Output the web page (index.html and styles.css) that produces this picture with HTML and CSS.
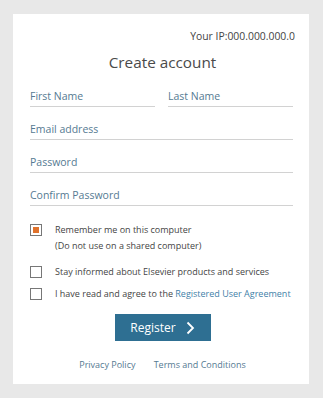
FILE: index.html
```html
<!DOCTYPE html>
<html lang="en">
<head>
    <meta charset="UTF-8">
    <meta name="viewport" content="width=device-width, initial-scale=1.0">
    <title>Create account</title>
    <link rel="stylesheet" href="styles.css">
</head>
<body>
    <div class="card">
        <div class="ip">Your IP:000.000.000.0</div>
        <h2 class="title">Create account</h2>
        <div class="row">
            <div class="field"><span>First Name</span></div>
            <div class="field"><span>Last Name</span></div>
        </div>
        <div class="field"><span>Email address</span></div>
        <div class="field"><span>Password</span></div>
        <div class="field"><span>Confirm Password</span></div>

        <div class="checks">
            <div class="check">
                <span class="box checked"></span>
                <div class="text">
                    Remember me on this computer<br>
                    <span class="sub">(Do not use on a shared computer)</span>
                </div>
            </div>
            <div class="check">
                <span class="box"></span>
                <div class="text">Stay informed about Elsevier products and services</div>
            </div>
            <div class="check">
                <span class="box"></span>
                <div class="text">I have read and agree to the <a href="#">Registered User Agreement</a></div>
            </div>
        </div>

        <div class="actions">
            <button class="btn">Register
                <svg width="9" height="14" viewBox="0 0 9 14"><path d="M1.5 1.5 L7 7 L1.5 12.5" fill="none" stroke="#fff" stroke-width="1.8"/></svg>
            </button>
        </div>
        <div class="links">
            <a href="#">Privacy Policy</a>
            <a href="#">Terms and Conditions</a>
        </div>
    </div>
</body>
</html>
```

FILE: styles.css
```css
body {
    margin: 0;
    padding: 14px 14px 14px 13px;
    background: #e8e8e8;
    font-family: 'Open Sans', sans-serif;
    color: #505050;
}

.card {
    background: #fff;
    height: 370px;
    box-sizing: border-box;
    padding: 16px 14px 0 17px;
}

.ip {
    text-align: right;
    font-size: 10.4px;
    color: #444;
    line-height: 12px;
}

.title {
    margin: 10px 0 0;
    text-align: center;
    font-size: 15.3px;
    font-weight: normal;
    color: #4a4a4a;
    line-height: 20px;
}

.row {
    display: flex;
    gap: 13px;
    margin-top: 17px;
    margin-right: 2px;
}

.row .field {
    flex: 1;
}

.field {
    padding-bottom: 3px;
    border-bottom: 1px solid #d2d2d2;
    font-size: 10.5px;
    line-height: 14px;
    color: #557a92;
}

.row + .field,
.field + .field {
    margin-top: 15px;
    margin-right: 2px;
}

.row .field + .field {
    margin-top: 0;
    margin-right: 0;
}

.checks {
    margin-top: 18px;
}

.check {
    display: flex;
    align-items: flex-start;
    margin-bottom: 10px;
}

.check:first-child {
    margin-bottom: 14px;
}

.box {
    width: 10px;
    height: 10px;
    border: 1.5px solid #777;
    flex: none;
    margin-right: 13px;
    position: relative;
}

.box.checked::after {
    content: "";
    position: absolute;
    left: 2px;
    top: 2px;
    width: 6px;
    height: 6px;
    background: #e0722c;
}

.text {
    font-size: 9px;
    line-height: 12px;
    color: #444;
}

.sub {
    display: inline-block;
    margin-top: 4px;
}

.text a {
    color: #3f7fa8;
    text-decoration: none;
}

.actions {
    text-align: center;
    margin-top: 14px;
}

.btn {
    width: 96px;
    height: 27px;
    border: none;
    background: #2e6f92;
    color: #fff;
    font-family: 'Open Sans', sans-serif;
    font-size: 12px;
    display: inline-flex;
    align-items: center;
    justify-content: center;
    gap: 10px;
    cursor: pointer;
}

.links {
    text-align: center;
    margin-top: 15px;
    line-height: 12px;
}

.links a {
    font-size: 9px;
    color: #557a92;
    text-decoration: none;
    margin: 0 7px;
}
```
